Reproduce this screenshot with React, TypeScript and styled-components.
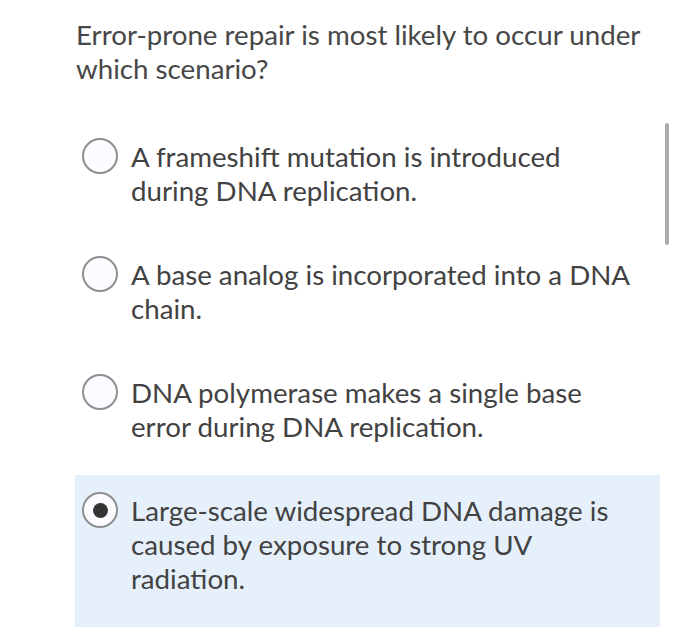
import React, { useState } from 'react';
import styled, { createGlobalStyle } from 'styled-components';

const GlobalStyle = createGlobalStyle`
  html, body {
    margin: 0;
    padding: 0;
    background: #ffffff;
  }
  body {
    font-family: Lato, "Open Sans", "Liberation Sans", sans-serif;
    color: #444444;
  }
`;

const Page = styled.div`
  position: relative;
  width: 700px;
  height: 639px;
  overflow: hidden;
  box-sizing: border-box;
  padding: 18px 20px 0 75px;
`;

const Question = styled.div`
  font-size: 27.7px;
  line-height: 34px;
  color: #474747;
  padding-left: 1px;
  margin-bottom: 35px;
  white-space: nowrap;
`;

const OptionList = styled.div`
  display: flex;
  flex-direction: column;
  width: 585px;
`;

const Option = styled.label<{ selected: boolean }>`
  display: flex;
  align-items: flex-start;
  gap: 13px;
  padding: 19px 0 31px 7px;
  background: ${p => (p.selected ? '#e6f0fb' : 'transparent')};
  cursor: pointer;
`;

const Radio = styled.span<{ selected: boolean }>`
  flex: none;
  width: 36px;
  height: 36px;
  margin-top: -2px;
  box-sizing: border-box;
  border-radius: 50%;
  border: 2px solid #8f8f8f;
  background: #fbfcff;
  display: flex;
  align-items: center;
  justify-content: center;

  &::after {
    content: '';
    width: 15px;
    height: 15px;
    border-radius: 50%;
    background: #333333;
    display: ${p => (p.selected ? 'block' : 'none')};
  }
`;

const OptionText = styled.span`
  font-size: 27.7px;
  line-height: 34px;
  color: #424242;
  white-space: nowrap;
`;

const ScrollThumb = styled.div`
  position: absolute;
  left: 665px;
  top: 123px;
  width: 4px;
  height: 122px;
  border-radius: 2px;
  background: #ababab;
`;

const options: string[][] = [
  ['A frameshift mutation is introduced', 'during DNA replication.'],
  ['A base analog is incorporated into a DNA', 'chain.'],
  ['DNA polymerase makes a single base', 'error during DNA replication.'],
  ['Large-scale widespread DNA damage is', 'caused by exposure to strong UV', 'radiation.'],
];

export default function App() {
  const [selected, setSelected] = useState(3);

  return (
    <>
      <GlobalStyle />
      <Page>
        <Question>
          Error-prone repair is most likely to occur under
          <br />
          which scenario?
        </Question>
        <OptionList>
          {options.map((lines, i) => (
            <Option key={i} selected={selected === i} onClick={() => setSelected(i)}>
              <Radio selected={selected === i} />
              <OptionText>
                {lines.map((line, j) => (
                  <React.Fragment key={j}>
                    {j > 0 && <br />}
                    {line}
                  </React.Fragment>
                ))}
              </OptionText>
            </Option>
          ))}
        </OptionList>
        <ScrollThumb />
      </Page>
    </>
  );
}
